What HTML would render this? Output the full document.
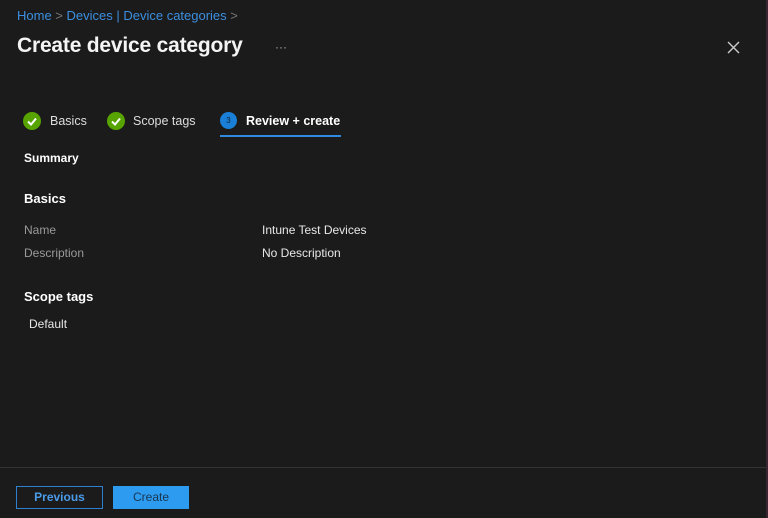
<!DOCTYPE html>
<html><head><style>
body{margin:0;width:768px;height:518px;background:#1b1b1b;font-family:"Liberation Sans",sans-serif;position:relative;overflow:hidden;color:#fff}
.a{position:absolute;white-space:nowrap}
.lbl{color:#9a9a9a;font-size:12px}
.val{color:#e8e8e8;font-size:12px}
.h{font-weight:bold;font-size:13px;color:#fff}
.chk{position:absolute;width:18px;height:18px;border-radius:50%;background:#57a300}
</style></head><body>
<div style="position:absolute;right:0;top:0;width:2px;height:518px;background:#3a2430"></div>
<div class="a" style="left:17px;top:8px;font-size:13px;color:#3c8fe0">Home <span style="color:#777">&gt;</span> Devices | Device categories <span style="color:#777">&gt;</span></div>
<div class="a" style="left:17px;top:34px;font-size:21px;font-weight:bold;color:#f4f4f4;letter-spacing:-0.2px">Create device category</div>
<div class="a" style="left:275px;top:40px;font-size:12px;color:#aaa">···</div>
<svg class="a" style="left:727px;top:41px" width="13" height="13"><path d="M1 1L12 12M12 1L1 12" stroke="#ccc" stroke-width="1.4"/></svg>
<div class="chk" style="left:23px;top:112px"><svg width="18" height="18"><path d="M5 9.5l3 3 5-6" stroke="#fff" stroke-width="2" fill="none"/></svg></div>
<div class="a" style="left:50px;top:114px;font-size:12.5px;color:#ddd">Basics</div>
<div class="chk" style="left:107px;top:112px"><svg width="18" height="18"><path d="M5 9.5l3 3 5-6" stroke="#fff" stroke-width="2" fill="none"/></svg></div>
<div class="a" style="left:133px;top:114px;font-size:12.5px;color:#ddd">Scope tags</div>
<div class="a" style="left:220px;top:112px;width:17px;height:17px;border-radius:50%;background:#1a7fd6;font-size:8px;color:#123;text-align:center;line-height:17px">3</div>
<div class="a" style="left:246px;top:114px;font-size:12.5px;font-weight:bold;color:#fff">Review + create</div>
<div class="a" style="left:220px;top:135px;width:121px;height:2px;background:#2f8ae0"></div>
<div class="a h" style="left:24px;top:151px;font-size:12px">Summary</div>
<div class="a h" style="left:24px;top:191px">Basics</div>
<div class="a lbl" style="left:24px;top:223px">Name</div>
<div class="a val" style="left:262px;top:223px">Intune Test Devices</div>
<div class="a lbl" style="left:24px;top:246px">Description</div>
<div class="a val" style="left:262px;top:246px">No Description</div>
<div class="a h" style="left:24px;top:289px">Scope tags</div>
<div class="a val" style="left:29px;top:317px">Default</div>
<div class="a" style="left:0;top:467px;width:766px;height:1px;background:#333"></div>
<div class="a" style="left:16px;top:486px;width:85px;height:21px;border:1px solid #2f7fcf;color:#4a9be8;font-size:12px;font-weight:bold;text-align:center;line-height:21px">Previous</div>
<div class="a" style="left:113px;top:486px;width:76px;height:23px;background:#2d9bf0;color:#1a3550;font-size:12px;text-align:center;line-height:23px">Create</div>
</body></html>
